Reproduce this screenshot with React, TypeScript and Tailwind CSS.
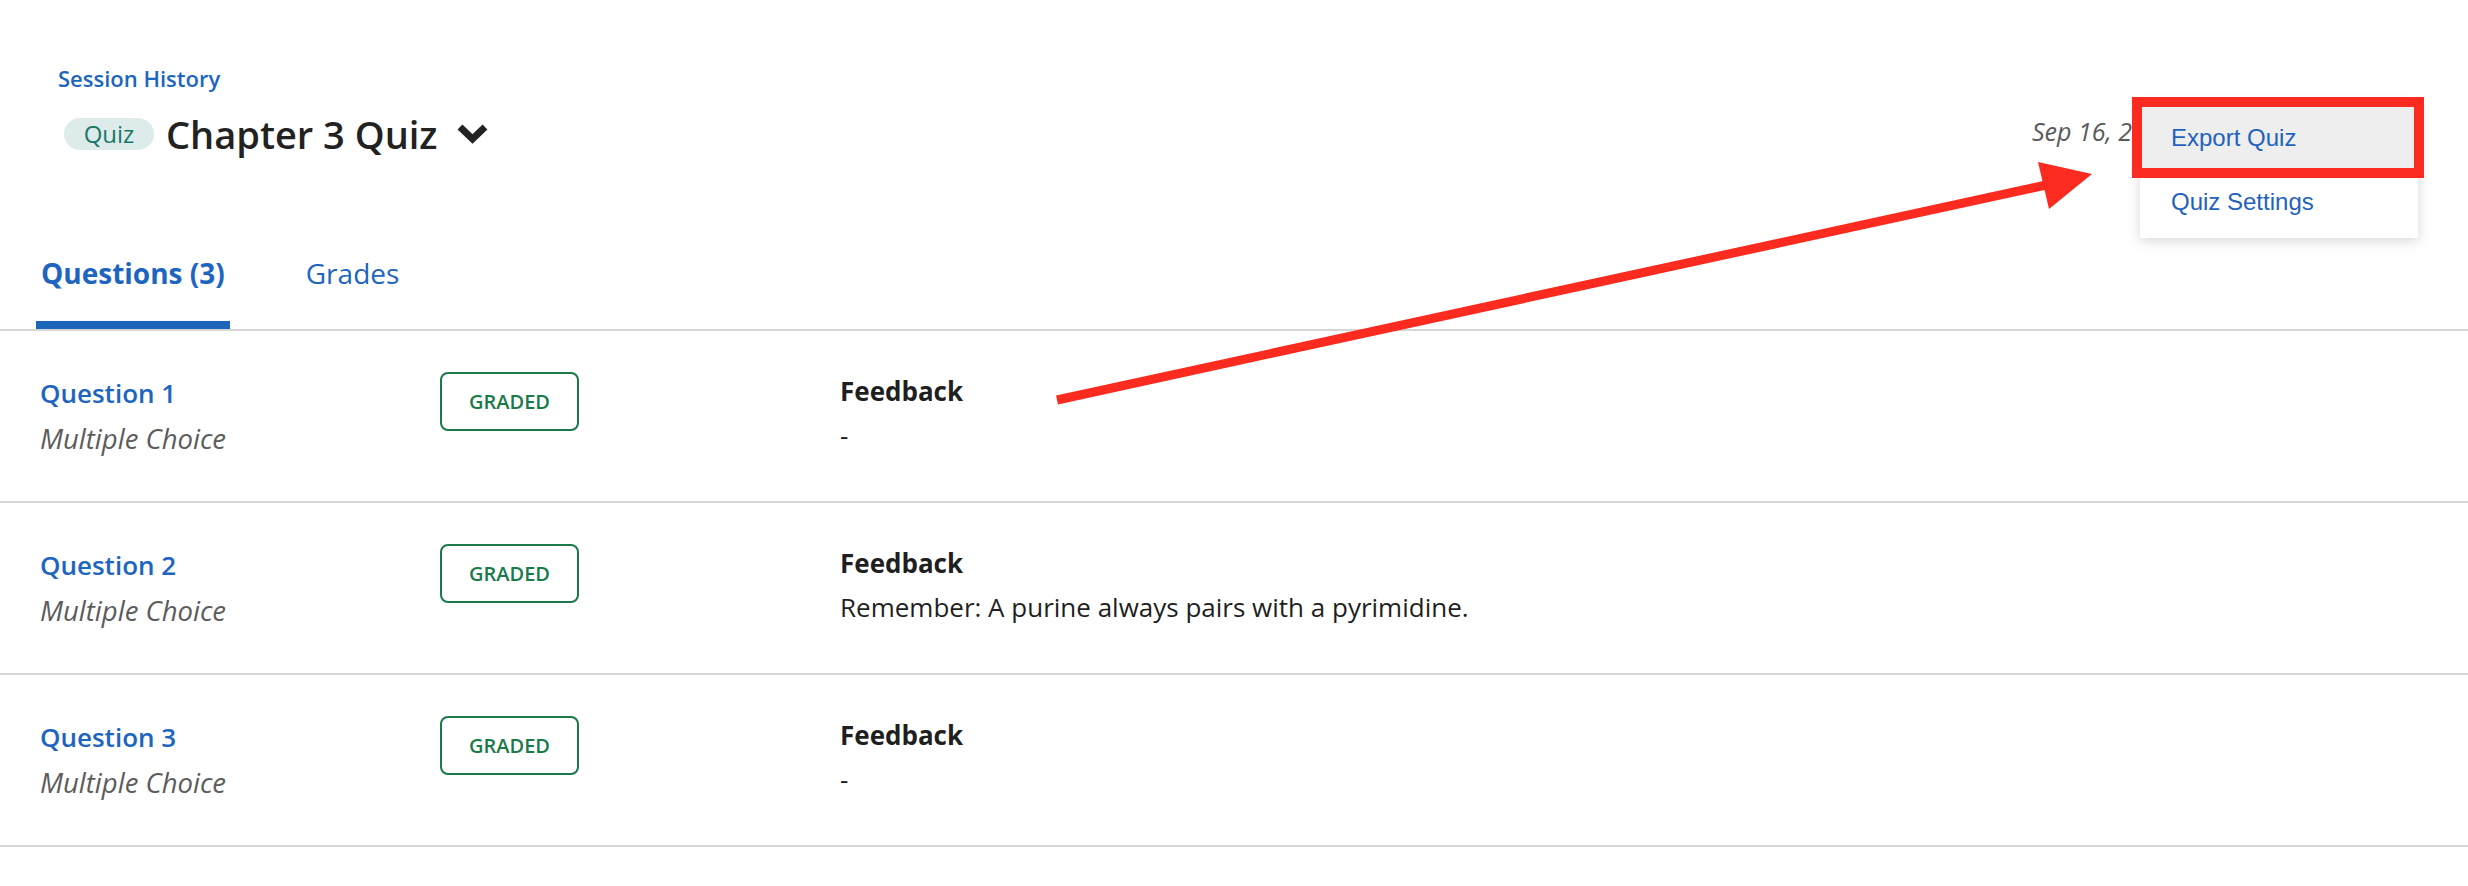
import React from 'react';

type QuestionRow = {
  id: number;
  title: string;
  kind: string;
  status: string;
  feedback: string;
};

const questions: QuestionRow[] = [
  { id: 1, title: 'Question 1', kind: 'Multiple Choice', status: 'GRADED', feedback: '-' },
  { id: 2, title: 'Question 2', kind: 'Multiple Choice', status: 'GRADED', feedback: 'Remember: A purine always pairs with a pyrimidine.' },
  { id: 3, title: 'Question 3', kind: 'Multiple Choice', status: 'GRADED', feedback: '-' },
];

function ChevronDown() {
  return (
    <svg width="33" height="22" viewBox="0 0 33 22" className="flex-none">
      <polyline points="4,4 16.5,16 29,4" fill="none" stroke="#222222" strokeWidth="7" strokeLinejoin="miter" strokeLinecap="butt" />
    </svg>
  );
}

export default function App() {
  const tabs = [
    { id: 'questions', label: `Questions (${questions.length})` },
    { id: 'grades', label: 'Grades' },
  ];
  const activeTab = 'questions';

  return (
    <div className="relative w-full min-h-[886px] bg-white font-['Open_Sans',sans-serif] text-[#222222] pt-[63px] overflow-hidden">
      {/* Header */}
      <div className="pl-[58px] pr-[47px]">
        <div className="text-[22px] leading-[30px] font-semibold text-[#1d65be]">Session History</div>
        <div className="mt-[22px] h-[38px] flex items-center">
          <div className="pl-[6px] flex items-center">
            <span className="h-[32px] w-[90px] rounded-full bg-[#ddeceb] text-[#1b7866] text-[24px] leading-[32px] flex items-center justify-center">
              Quiz
            </span>
            <h1 className="ml-[12px] text-[38px] leading-[38px] font-semibold text-[#222222] whitespace-nowrap">Chapter 3 Quiz</h1>
            <span className="ml-[18px] flex items-center">
              <ChevronDown />
            </span>
          </div>
          <div className="ml-auto flex items-center">
            <span className="w-[150px] whitespace-nowrap text-[25px] leading-[32px] italic text-[#5a5a5a] mb-[6px]">
              Sep 16, 2024
            </span>
            <button className="ml-[16px] w-[223px] h-[53px] mb-[16px] rounded-[6px] border-2 border-[#1d65be] text-[#1d65be] text-[24px] shadow-[0_0_0_3px_#c8ddfb]">
              Actions
            </button>
          </div>
        </div>
      </div>

      {/* Tabs */}
      <div className="mt-[101px] pl-[36px] flex gap-[71px] border-b-2 border-[#d6d6d6]">
        {tabs.map((tab) => {
          const isActive = tab.id === activeTab;
          return (
            <button key={tab.id} className="flex flex-col items-stretch">
              <span
                className={`px-[5px] text-[28px] leading-[38px] text-[#1d65be] whitespace-nowrap ${
                  isActive ? 'font-bold' : 'font-normal'
                }`}
              >
                {tab.label}
              </span>
              <span className={`mt-[29px] h-[8px] ${isActive ? 'bg-[#1e66b9]' : 'bg-transparent'}`} />
            </button>
          );
        })}
      </div>

      {/* Question rows */}
      <div>
        {questions.map((q) => (
          <div key={q.id} className="h-[172px] border-b-2 border-[#d6d6d6] pl-[40px] grid grid-cols-[400px_400px_1fr]">
            <div className="pt-[40px]">
              <div className="text-[26px] leading-[45px] font-semibold text-[#1d65be]">{q.title}</div>
              <div className="text-[27.5px] leading-[45px] italic text-[#5c5c5c]">{q.kind}</div>
            </div>
            <div className="pt-[41px]">
              <span className="w-[139px] h-[59px] rounded-[8px] border-2 border-[#1a7a4a] flex items-center justify-center text-[20px] font-semibold text-[#1a7a4a]">
                {q.status}
              </span>
            </div>
            <div className="pt-[38px]">
              <div className="text-[26px] leading-[44px] font-bold text-[#1f1f1f]">Feedback</div>
              <div className="text-[26px] leading-[44px] text-[#1f1f1f]">{q.feedback}</div>
            </div>
          </div>
        ))}
      </div>

      {/* Dropdown menu */}
      <div className="absolute top-[102px] right-[50px] w-[278px] z-10 bg-white py-[4px] shadow-[0_3px_12px_rgba(0,0,0,0.16)] font-['Liberation_Sans',Arial,sans-serif]">
        <div className="h-[64px] bg-[#eeeeee] pl-[31px] flex items-center text-[24px] text-[#1f62bd]">Export Quiz</div>
        <div className="h-[64px] pl-[31px] flex items-center text-[24px] text-[#1f62bd]">Quiz Settings</div>
      </div>

      {/* Annotation highlight */}
      <div className="absolute top-[97px] right-[44px] w-[292px] h-[81px] z-20 border-[10px] border-[#fc2b1f] pointer-events-none" />

      {/* Annotation arrow */}
      <svg className="absolute inset-0 z-20 pointer-events-none" width="2468" height="886" viewBox="0 0 2468 886">
        <line x1="1057" y1="400" x2="2046" y2="185" stroke="#fc2b1f" strokeWidth="9" />
        <polygon points="2038,162 2092,174 2049,209" fill="#fc2b1f" />
      </svg>
    </div>
  );
}
